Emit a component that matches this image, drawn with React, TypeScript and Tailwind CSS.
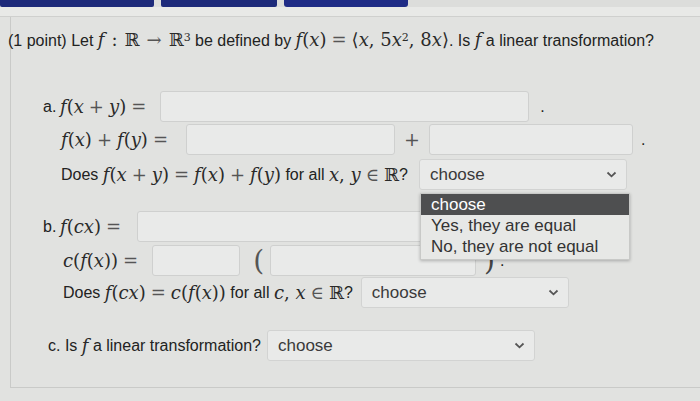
import React from "react";

const V = ({ children }: { children: React.ReactNode }) => (
  <span className="italic">{children}</span>
);

const M = ({ children }: { children: React.ReactNode }) => (
  <span className="font-['DejaVu_Serif',serif] text-[18px] text-[#2a2a2a]">{children}</span>
);

const Op = ({ children }: { children: React.ReactNode }) => (
  <span className="mx-[5px] text-[#555]">{children}</span>
);

const Box = ({ w }: { w: string }) => (
  <div className={`${w} h-[31px] rounded-[3px] border border-[#cfd0cf] bg-[#e9eae9]`} />
);

const Chevron = () => (
  <svg width="11" height="7" viewBox="0 0 11 7" className="shrink-0">
    <path d="M1.5 1.5 L5.5 5.3 L9.5 1.5" fill="none" stroke="#555" strokeWidth="1.8" />
  </svg>
);

const Select = ({ w }: { w: string }) => (
  <div
    className={`${w} flex h-[31px] items-center justify-between rounded-[3px] border border-[#d2d3d2] bg-[#e9eae9] pl-[10px] pr-[9px] text-[17px] text-[#3a3a3a]`}
  >
    <span>choose</span>
    <Chevron />
  </div>
);

export default function App() {
  return (
    <div className="h-[401px] w-[700px] overflow-hidden bg-[#e1e2e0] font-['Liberation_Sans',Arial,sans-serif] text-[16px] text-[#222]">
      {/* tabs */}
      <div className="flex h-[7px] gap-[7px] bg-[#dcdddb]">
        <div className="w-[154px] rounded-b-[2px] bg-[#1d2a7a]" />
        <div className="w-[116px] rounded-b-[2px] bg-[#1d2a7a]" />
        <div className="w-[124px] rounded-b-[3px] bg-[#1f2c86]" />
      </div>
      <div className="h-[10px] border-b border-[#cfd0ce] bg-[#e8e9e7]" />

      <div className="ml-[10px] h-[371px] border-b border-l border-[#c9cac8]">
        <div className="pt-[11px] leading-[24px]">
          <div className="-ml-[3px] whitespace-nowrap">
            (1 point) Let{" "}
            <M>
              <V>f</V>
              <span className="mx-[7px]">:</span>ℝ<span className="mx-[7px] text-[#555]">→</span>ℝ
              <sup className="text-[11px]">3</sup>
            </M>{" "}
            be defined by{" "}
            <M>
              <V>f</V>(<V>x</V>)<Op>=</Op>⟨<V>x</V>, 5<V>x</V>
              <sup className="text-[11px]">2</sup>, 8<V>x</V>⟩
            </M>
            . Is <M><V>f</V></M> a linear transformation?
          </div>
        </div>

        {/* part a */}
        <div className="mt-[38px] flex flex-col gap-[2px]">
          <div className="flex h-[31px] items-center whitespace-nowrap">
            <span className="ml-[32px] w-[17px]">a.</span>
            <M>
              <V>f</V>(<V>x</V><Op>+</Op><V>y</V>)<Op>=</Op>
            </M>
            <div className="ml-[9px]">
              <Box w="w-[369px]" />
            </div>
            <span className="ml-[11px]">.</span>
          </div>
          <div className="flex h-[31px] items-center whitespace-nowrap">
            <span className="ml-[50px]" />
            <M>
              <V>f</V>(<V>x</V>)<Op>+</Op><V>f</V>(<V>y</V>)<Op>=</Op>
            </M>
            <div className="ml-[13px]">
              <Box w="w-[209px]" />
            </div>
            <span className="mx-[9px] font-['DejaVu_Serif',serif] text-[19px] text-[#555]">+</span>
            <Box w="w-[204px]" />
            <span className="ml-[8px]">.</span>
          </div>
          <div className="relative mt-[2px] flex h-[31px] items-center whitespace-nowrap">
            <span className="ml-[50px]">Does&nbsp;</span>
            <M>
              <V>f</V>(<V>x</V><Op>+</Op><V>y</V>)<Op>=</Op><V>f</V>(<V>x</V>)<Op>+</Op><V>f</V>(<V>y</V>)
            </M>
            <span>&nbsp;for all&nbsp;</span>
            <M>
              <V>x</V>, <V>y</V><Op>∈</Op>ℝ
            </M>
            <span>?</span>
            <div className="ml-[11px]">
              <Select w="w-[208px]" />
            </div>

            {/* open dropdown list */}
            <div className="absolute left-[409px] top-[34px] z-10 w-[210px] border border-[#c8c9c7] bg-[#e7e8e6] pb-[2px] text-[17px] leading-[21px] text-[#333] shadow-[0_1px_3px_rgba(0,0,0,0.25)]">
              <div className="bg-[#4e4f50] px-[10px] text-white">choose</div>
              <div className="px-[10px]">Yes, they are equal</div>
              <div className="px-[10px]">No, they are not equal</div>
            </div>
          </div>
        </div>

        {/* part b */}
        <div className="mt-[21px] flex flex-col gap-[3px]">
          <div className="flex h-[31px] items-center whitespace-nowrap">
            <span className="ml-[32px] w-[17px]">b.</span>
            <M>
              <V>f</V>(<V>cx</V>)<Op>=</Op>
            </M>
            <div className="ml-[11px]">
              <Box w="w-[300px]" />
            </div>
          </div>
          <div className="flex h-[31px] items-center whitespace-nowrap">
            <span className="ml-[52px]" />
            <M>
              <V>c</V>(<V>f</V>(<V>x</V>))<Op>=</Op>
            </M>
            <div className="ml-[9px]">
              <Box w="w-[88px]" />
            </div>
            <span className="ml-[13px] mr-[6px] font-['DejaVu_Serif',serif] text-[28px] font-light leading-none text-[#555]">(</span>
            <Box w="w-[206px]" />
            <span className="ml-[8px] font-['DejaVu_Serif',serif] text-[28px] leading-none text-[#444]">)</span>
            <span className="ml-[5px]">.</span>
          </div>
          <div className="-mt-[2px] flex h-[31px] items-center whitespace-nowrap">
            <span className="ml-[52px]">Does&nbsp;</span>
            <M>
              <V>f</V>(<V>cx</V>)<Op>=</Op><V>c</V>(<V>f</V>(<V>x</V>))
            </M>
            <span>&nbsp;for all&nbsp;</span>
            <M>
              <V>c</V>, <V>x</V><Op>∈</Op>ℝ
            </M>
            <span>?</span>
            <div className="ml-[8px]">
              <Select w="w-[208px]" />
            </div>
          </div>
        </div>

        {/* part c */}
        <div className="mt-[22px] flex h-[31px] items-center whitespace-nowrap">
          <span className="ml-[37px]">c. Is&nbsp;</span>
          <M>
            <V>f</V>
          </M>
          <span>&nbsp;a linear transformation?</span>
          <div className="ml-[6px]">
            <Select w="w-[268px]" />
          </div>
        </div>
      </div>
    </div>
  );
}
